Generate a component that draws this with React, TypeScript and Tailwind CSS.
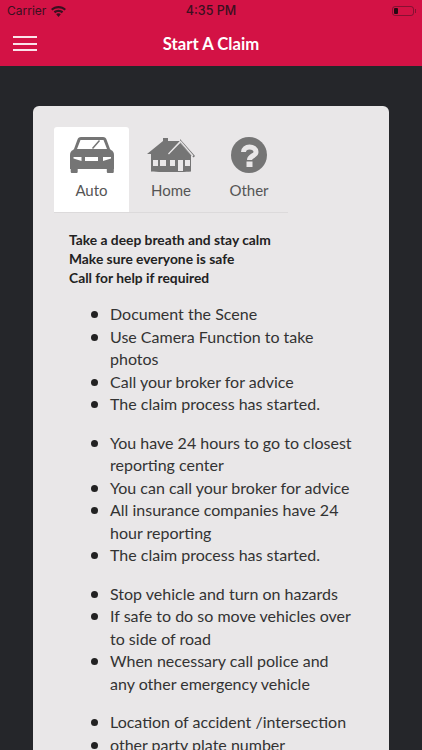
const FONT = "font-['Lato','Open_Sans',sans-serif]";

const LISTS = [
  ["Document the Scene", "Use Camera Function to take photos", "Call your broker for advice", "The claim process has started."],
  [
    "You have 24 hours to go to closest reporting center",
    "You can call your broker for advice",
    "All insurance companies have 24 hour reporting",
    "The claim process has started.",
  ],
  [
    "Stop vehicle and turn on hazards",
    "If safe to do so move vehicles over to side of road",
    "When necessary call police and any other emergency vehicle",
  ],
  ["Location of accident /intersection", "other party plate number"],
];

function CarIcon() {
  return (
    <svg width="44" height="36" viewBox="0 0 44 36" fill="#757575">
      <path
        fillRule="evenodd"
        d="M11 0h22c2 0 3 1 3.500 2.500L40 12l1 1c2 1 3 2.500 3 5v14h-.2v2.500c0 1-.5 1.500-1.500 1.500h-4c-1 0-1.500-.5-1.500-1.500V32H7.700v2.500c0 1-.5 1.500-1.500 1.500h-4c-1 0-1.500-.5-1.500-1.500V32H0V18c0-2.500 1-4 3-5l1-1 3.500-9.500C8 1 9 0 11 0zM10.500 3L7 12h30l-3.500-9zM3.500 20v1.500l8 2.500v-4zM33 20v4l8-2.500V20zM15 20v4h13v-4z"
      />
      <path d="M22.500 11.500L29.500 3.500" stroke="#757575" strokeWidth="1.500" />
    </svg>
  );
}

function HomeIcon() {
  return (
    <svg width="48" height="34" viewBox="0 0 48 34" fill="#757575">
      <path d="M16 0h5v3h12L21 16H0L16 3z" />
      <path d="M33 1L48 18l-1.500 1.500L33 5z" />
      <path
        fillRule="evenodd"
        d="M4 16h17L33 5l11 12v16.500c-8 .8-30 .8-40 0zM6 22v6h5v-6zM13 22v6h6v-6zM23 22v6h5v-6zM31 22v11h5V22zM38 22v6h5v-6z"
      />
      <path d="M21.500 16L33.500 3.500 46 18" fill="none" stroke="#e9e7e8" strokeWidth="1.200" />
    </svg>
  );
}

function OtherIcon() {
  return (
    <svg width="36" height="36" viewBox="0 0 36 36">
      <circle cx="18" cy="18" r="18" fill="#757575" />
      <path
        d="M12.500 15c0-3 2.500-5 6-5s6.500 2 6.500 5c0 4-6.500 3.500-6.500 8"
        fill="none"
        stroke="#e9e7e8"
        strokeWidth="5"
      />
      <rect x="15.500" y="24.500" width="6" height="5.500" fill="#e9e7e8" />
    </svg>
  );
}

function StatusBar() {
  return (
    <div className="relative h-[22px] flex items-center justify-between pl-[7px] pr-[6px] text-[13px] text-[#3a1020]">
      <div className="flex items-center gap-[5px]">
        <span className="font-['Inter',sans-serif] text-[12px]">Carrier</span>
        <svg width="15" height="11" viewBox="0 0 15 11" fill="#3a1020">
          <path d="M7.500 0C4.600 0 2.200 1 0 3l1.500 1.600C3.300 3 5.200 2.200 7.500 2.200S11.700 3 13.500 4.600L15 3C12.800 1 10.400 0 7.500 0z" />
          <path d="M7.500 3.700c-1.900 0-3.500.7-4.800 1.900l1.500 1.600c1-.9 2-1.300 3.300-1.300s2.300.4 3.300 1.300l1.500-1.600C11 4.400 9.400 3.700 7.500 3.700z" />
          <path d="M7.500 7.300c-1 0-1.700.3-2.300.9L7.500 11l2.300-2.800c-.6-.6-1.300-.9-2.300-.9z" />
        </svg>
      </div>
      <span className="absolute left-1/2 -translate-x-1/2 font-['Inter',sans-serif] text-[12.500px] font-medium">4:35 PM</span>
      <div className="flex items-center">
        <div className="w-[22px] h-[10px] rounded-[3px] border border-[#3a1020]/50 p-[1px]">
          <div className="w-[4px] h-full rounded-[1px] bg-[#240a12]" />
        </div>
        <div className="w-[1px] h-[4px] bg-[#3a1020]/50 ml-[1px]" />
      </div>
    </div>
  );
}

export default function App() {
  return (
    <div className={`w-[422px] h-[750px] overflow-hidden bg-[#25262a] ${FONT}`}>
      <div className="h-[66px] bg-[#d31245]">
        <StatusBar />
        <div className="relative h-[44px] flex items-center justify-center">
          <button className="absolute left-[13px] top-[14px] flex flex-col gap-[4.500px]">
            <span className="block w-[24px] h-[2px] bg-[#fbe3ea]" />
            <span className="block w-[24px] h-[2px] bg-[#fbe3ea]" />
            <span className="block w-[24px] h-[2px] bg-[#fbe3ea]" />
          </button>
          <h1 className="text-white text-[16.700px] font-bold pt-[1px]">Start A Claim</h1>
        </div>
      </div>

      <div className="pt-[40px] pl-[33px] w-[389px]">
        <div className="bg-[#e9e7e8] rounded-[6px] pt-[21px] pl-[21px] pr-[24px] pb-[40px]">
          <div className="flex w-[234px] border-b border-[#dcdadb] h-[86px]">
            <div className="w-[75px] h-[85px] bg-white rounded-t-[3px] flex flex-col items-center pt-[10px]">
              <div className="h-[36px] flex items-center"><CarIcon /></div>
              <span className="text-[15px] leading-[20px] text-[#555] mt-[7px]">Auto</span>
            </div>
            <div className="w-[84px] flex flex-col items-center pt-[10px]">
              <div className="h-[36px] flex items-center"><HomeIcon /></div>
              <span className="text-[15px] leading-[20px] text-[#555] mt-[7px]">Home</span>
            </div>
            <div className="w-[72px] flex flex-col items-center pt-[10px]">
              <div className="h-[36px] flex items-center"><OtherIcon /></div>
              <span className="text-[15px] leading-[20px] text-[#555] mt-[7px]">Other</span>
            </div>
          </div>

          <div className="pl-[15px] pt-[17px] text-[13.800px] leading-[19px] font-bold text-[#222]">
            <p>Take a deep breath and stay calm</p>
            <p>Make sure everyone is safe</p>
            <p>Call for help if required</p>
          </div>

          <div className="pt-[16px] pl-[37px] pr-[12px] flex flex-col gap-[16px]">
            {LISTS.map((list, i) => (
              <ul key={i} className="text-[16px] leading-[22.500px] text-[#333]">
                {list.map((item) => (
                  <li key={item} className="flex gap-[12px]">
                    <span className="w-[7px] h-[7px] mt-[8px] shrink-0 rounded-full bg-[#222]" />
                    <span>{item}</span>
                  </li>
                ))}
              </ul>
            ))}
          </div>
        </div>
      </div>
    </div>
  );
}
